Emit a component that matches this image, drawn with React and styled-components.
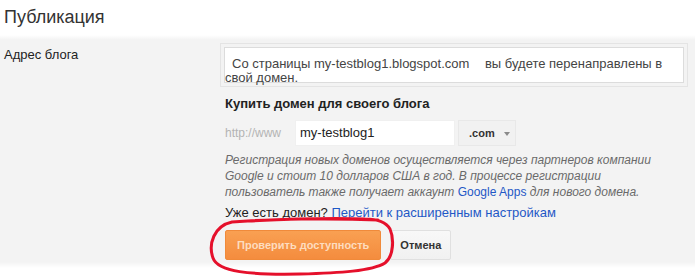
import React from "react";
import styled, { createGlobalStyle } from "styled-components";

const Global = createGlobalStyle`
  html, body { margin: 0; padding: 0; background: #fff; }
  body { font-family: "Liberation Sans", Arial, sans-serif; }
`;

const Page = styled.div`
  position: relative;
  width: 695px;
  height: 280px;
  overflow: hidden;
  background: #fff;
`;

const Header = styled.h1`
  margin: 0;
  height: 35px;
  line-height: 35px;
  padding-left: 4px;
  font-size: 18px;
  font-weight: normal;
  color: #333;
`;

const Panel = styled.div`
  display: grid;
  grid-template-columns: 220px 466px;
  padding: 12px 0 8px 4px;
  background: linear-gradient(
    to bottom,
    #ffffff 0px,
    #f3f3f3 5px,
    #f3f3f3 calc(100% - 6px),
    #ffffff 100%
  );
`;

const Label = styled.div`
  font-size: 13px;
  line-height: 16px;
  color: #222;
`;

const Content = styled.div`
  display: flex;
  flex-direction: column;
  align-items: flex-start;
`;

const NoteBox = styled.div`
  box-sizing: border-box;
  width: 460px;
  height: 36px;
  margin-bottom: 1px;
  padding-top: 9px;
  border: 1px solid #dcdcdc;
  outline: 1px solid #e4e4e4;
  outline-offset: 3px;
  background: #fff;
  font-size: 13px;
  line-height: 14px;
  color: #444;
  text-indent: 7px;
`;

const Gap = styled.span`
  display: inline-block;
  width: ${(p) => p.$w}px;
`;

const Title = styled.div`
  margin-top: 12px;
  font-size: 13px;
  font-weight: bold;
  line-height: 16px;
  color: #222;
  padding-left: 1px;
`;

const DomainRow = styled.div`
  margin-top: 8px;
  display: flex;
  align-items: center;
  height: 26px;
  padding-left: 1px;
`;

const Prefix = styled.span`
  font-size: 12px;
  color: #b3b3b3;
  margin-right: 14px;
`;

const Input = styled.div`
  box-sizing: border-box;
  width: 160px;
  height: 26px;
  padding-left: 4px;
  background: #fff;
  border: 1px solid #f0f0f0;
  font-size: 13px;
  line-height: 24px;
  color: #222;
`;

const Select = styled.div`
  box-sizing: border-box;
  margin-left: 3px;
  width: 58px;
  height: 26px;
  padding-left: 10px;
  display: flex;
  align-items: center;
  gap: 9px;
  background: #f1f1f1;
  border: 1px solid #e8e8e8;
  font-size: 11px;
  font-weight: bold;
  color: #333;
`;

const Arrow = styled.span`
  width: 0;
  height: 0;
  border-left: 3px solid transparent;
  border-right: 3px solid transparent;
  border-top: 4px solid #8a8a8a;
  margin-top: 1px;
`;

const Help = styled.div`
  margin-top: 6px;
  padding-left: 1px;
  font-size: 12px;
  font-style: italic;
  line-height: 16px;
  color: #6a6a6a;
  white-space: nowrap;
`;

const Link = styled.a`
  color: #1f58c6;
  font-style: ${(p) => (p.$upright ? "normal" : "inherit")};
  text-decoration: none;
`;

const Existing = styled.div`
  margin-top: 5px;
  padding-left: 1px;
  font-size: 13px;
  line-height: 16px;
  color: #222;
`;

const Buttons = styled.div`
  margin-top: 9px;
  display: flex;
  gap: 9px;
  padding-left: 1px;
`;

const Button = styled.button`
  box-sizing: border-box;
  height: 30px;
  padding: 0 ${(p) => (p.$primary ? 11 : 9)}px;
  font-family: "Liberation Sans", Arial, sans-serif;
  font-size: 11px;
  font-weight: bold;
  border-radius: 2px;
  cursor: pointer;
  border: 1px solid ${(p) => (p.$primary ? "#f08a3a" : "#e0e0e0")};
  color: ${(p) => (p.$primary ? "#fddcbf" : "#333")};
  background: ${(p) =>
    p.$primary
      ? "linear-gradient(#f9a052, #f48c3e)"
      : "linear-gradient(#f8f8f8, #f1f1f1)"};
`;

const Annotation = styled.svg`
  position: absolute;
  left: 0;
  top: 0;
  pointer-events: none;
`;

export default function App() {
  return (
    <Page>
      <Global />
      <Header>Публикация</Header>
      <Panel>
        <Label>Адрес блога</Label>
        <Content>
          <NoteBox>
            Со страницы my-testblog1.blogspot.com<Gap $w={12} /> вы будете
            перенаправлены в свой домен.
          </NoteBox>
          <Title>Купить домен для своего блога</Title>
          <DomainRow>
            <Prefix>http://www</Prefix>
            <Input>my-testblog1</Input>
            <Select>
              .com <Arrow />
            </Select>
          </DomainRow>
          <Help>
            Регистрация новых доменов осуществляется через партнеров компании
            <br />
            Google и стоит 10 долларов США в год. В процессе регистрации
            <br />
            пользователь также получает аккаунт{" "}
            <Link href="#" $upright>
              Google Apps
            </Link>{" "}
            для нового домена.
          </Help>
          <Existing>
            Уже есть домен? <Link href="#">Перейти к расширенным настройкам</Link>
          </Existing>
          <Buttons>
            <Button $primary>Проверить доступность</Button>
            <Button>Отмена</Button>
          </Buttons>
        </Content>
      </Panel>
      <Annotation width="695" height="280" viewBox="0 0 695 280">
        <path
          d="M 378 220 C 330 218, 270 219, 232 222 C 214 226, 208 244, 213 258 C 218 272, 250 275, 300 274 C 340 273, 372 271, 385 263 C 394 256, 394 238, 390 229 C 386 222, 378 219, 365 219 C 330 218, 290 219, 248 221"
          fill="none"
          stroke="#e5102b"
          strokeWidth="3"
          strokeLinecap="round"
        />
      </Annotation>
    </Page>
  );
}
